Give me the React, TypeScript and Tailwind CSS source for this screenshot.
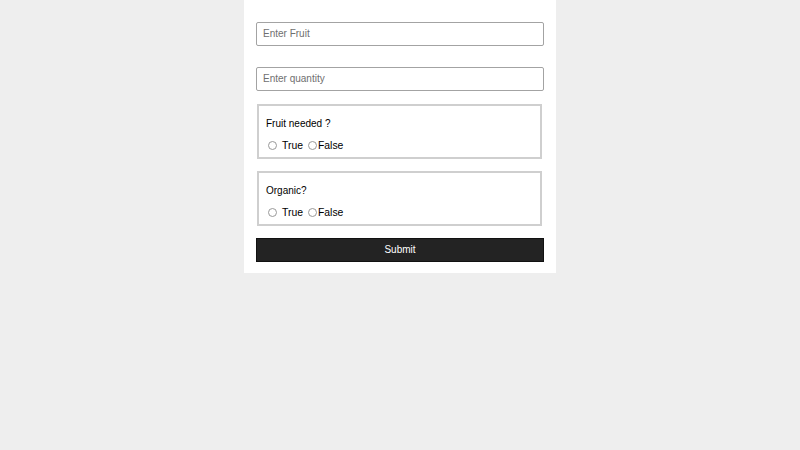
import React from "react";

function RadioGroup({ name, label }: { name: string; label: string }) {
  return (
    <fieldset className="ml-[1px] mr-[2px] h-[55px] border-2 border-[#cfcfcf] pl-[7px] pt-[11px]">
      <div className="text-[10px] leading-[13px] text-black">{label}</div>
      <div className="mt-[9px] flex items-center text-[10.4px] leading-[13px] text-black">
        <input
          type="radio"
          name={name}
          className="ml-[2px] h-[9px] w-[9px] appearance-none rounded-full border border-[#999] bg-white"
        />
        <span className="ml-[5px]">True</span>
        <input
          type="radio"
          name={name}
          className="ml-[5px] h-[9px] w-[9px] appearance-none rounded-full border border-[#999] bg-white"
        />
        <span className="ml-[1px]">False</span>
      </div>
    </fieldset>
  );
}

export default function App() {
  return (
    <div
      className="min-h-[450px] w-full bg-[#eeeeee]"
      style={{ fontFamily: '"Liberation Sans", Arial, sans-serif' }}
    >
      <div className="mx-auto flex w-[312px] flex-col bg-white px-3 pb-[11px] pt-[22px]">
        <input
          type="text"
          placeholder="Enter Fruit"
          className="h-[24px] w-full rounded-[2px] border border-[#a3a3a3] px-[6px] pb-[1px] text-[10px] text-black outline-none placeholder:text-[#6f6f6f]"
        />
        <input
          type="text"
          placeholder="Enter quantity"
          className="mt-[21px] h-[24px] w-full rounded-[2px] border border-[#a3a3a3] px-[6px] pb-[1px] text-[10px] text-black outline-none placeholder:text-[#6f6f6f]"
        />
        <div className="mt-[13px]">
          <RadioGroup name="needed" label="Fruit needed ?" />
        </div>
        <div className="mt-[12px]">
          <RadioGroup name="organic" label="Organic?" />
        </div>
        <button
          type="button"
          className="mt-[12px] h-[24px] w-full border border-[#111] bg-[#232323] pb-[1px] text-[10px] text-white"
        >
          Submit
        </button>
      </div>
    </div>
  );
}
